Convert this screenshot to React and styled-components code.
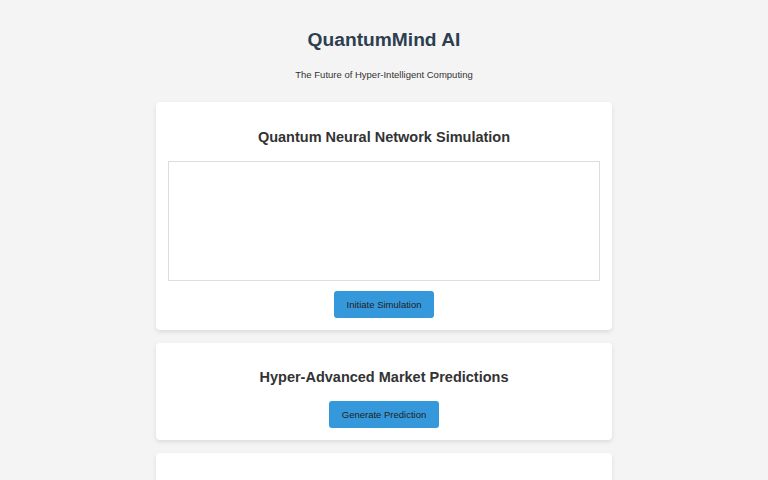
import React from 'react';
import styled, { createGlobalStyle } from 'styled-components';

const Global = createGlobalStyle`
    body {
        margin: 0;
        background: #f4f4f4;
        font-family: "Liberation Sans", Arial, sans-serif;
        color: #333;
    }
`;

const Page = styled.div`
    width: 456px;
    margin: 0 auto;
    padding-top: 28px;
`;

const Header = styled.header`
    text-align: center;
    margin-bottom: 21px;

    h1 {
        margin: 0;
        font-size: 19.2px;
        line-height: 24px;
        color: #2c3e50;
    }

    p {
        margin: 17px 0 0;
        font-size: 9.5px;
        line-height: 12px;
        color: #333;
    }
`;

const Card = styled.section`
    background: #fff;
    border-radius: 4px;
    box-shadow: 0 2px 4px rgba(0, 0, 0, 0.1);
    padding: 12px;
    margin-bottom: 13px;
    min-height: ${p => p.$min || 0}px;
    display: flex;
    flex-direction: column;
    align-items: center;
`;

const Title = styled.h2`
    margin: ${p => p.$top || 14}px 0 15px;
    font-size: 14.5px;
    line-height: 18px;
    color: #333;
    text-align: center;
`;

const Canvas = styled.div`
    align-self: stretch;
    height: 118px;
    border: 1px solid #ddd;
    background: #fff;
    margin-bottom: 10px;
`;

const Button = styled.button`
    background: #3498db;
    color: #222;
    border: none;
    border-radius: 3px;
    padding: 0 13px;
    height: 27px;
    font-family: "Liberation Sans", Arial, sans-serif;
    font-size: 9.5px;
    cursor: pointer;
`;

export default function App() {
    return (
        <React.Fragment>
            <Global />
            <Page>
                <Header>
                    <h1>QuantumMind AI</h1>
                    <p>The Future of Hyper-Intelligent Computing</p>
                </Header>
                <Card>
                    <Title>Quantum Neural Network Simulation</Title>
                    <Canvas />
                    <Button>Initiate Simulation</Button>
                </Card>
                <Card>
                    <Title $top={13}>Hyper-Advanced Market Predictions</Title>
                    <Button>Generate Prediction</Button>
                </Card>
                <Card $min={80} />
            </Page>
        </React.Fragment>
    );
}
